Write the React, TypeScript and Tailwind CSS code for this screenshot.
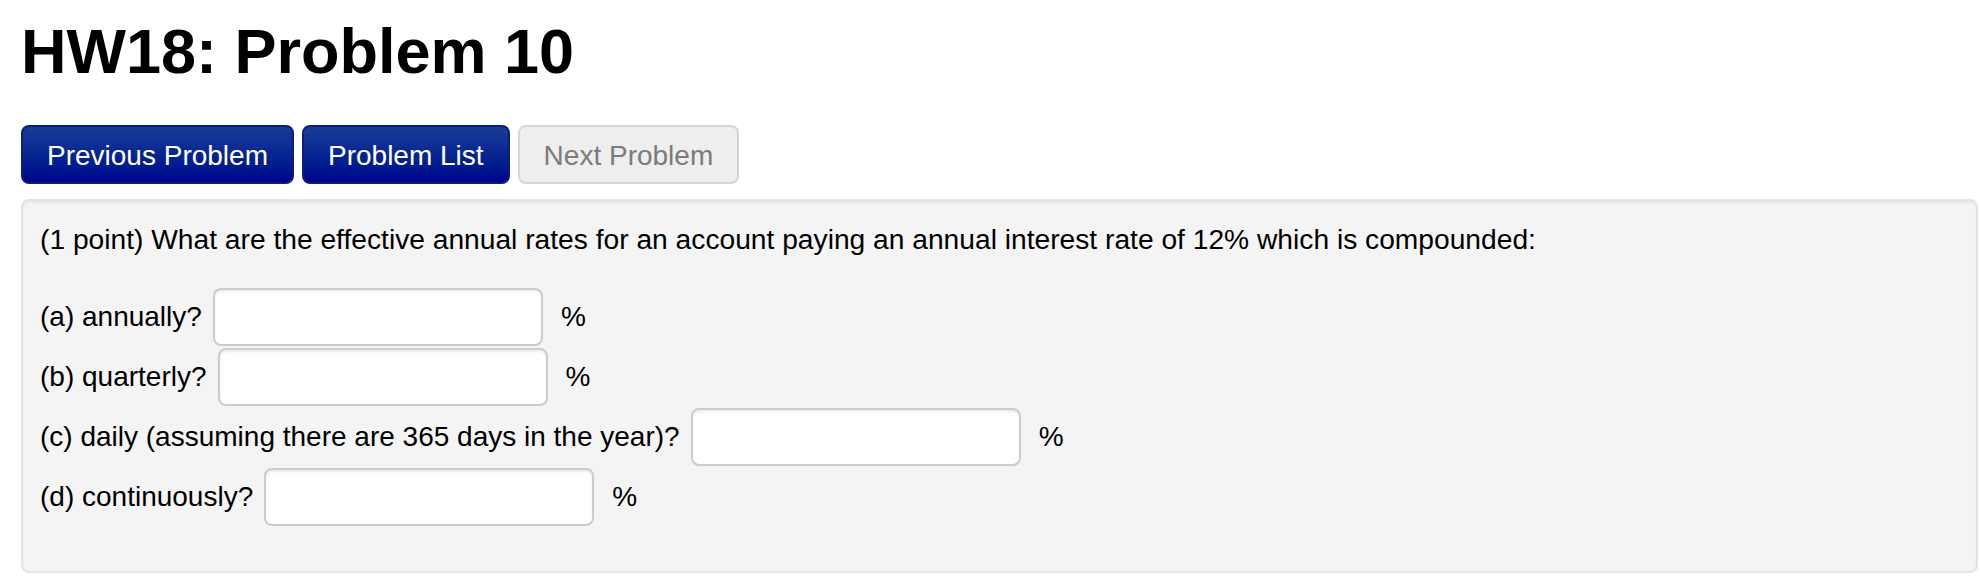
import React from "react";

const rows = [
  { label: "(a) annually?" },
  { label: "(b) quarterly?" },
  { label: "(c) daily (assuming there are 365 days in the year)?" },
  { label: "(d) continuously?" },
];

export default function App() {
  const navBtn =
    "flex h-[59px] items-center rounded-[8px] border-2 px-[24px] pt-[2px] text-[28px] leading-[40px]";

  return (
    <div className="min-h-[588px] bg-white pl-[21px] pr-[2px] pt-[20px] font-['Liberation_Sans',Arial,sans-serif] text-black">
      <h1 className="text-[63px] font-bold leading-[62px]">HW18: Problem 10</h1>

      {/* problem navigation */}
      <div className="mt-[43px] flex gap-[8px]">
        <button
          className={`${navBtn} border-[#0b1f7a] bg-linear-to-b from-[#1b3b95] to-[#00008b] text-white`}
        >
          Previous Problem
        </button>
        <button
          className={`${navBtn} border-[#0b1f7a] bg-linear-to-b from-[#1b3b95] to-[#00008b] text-white`}
        >
          Problem List
        </button>
        <button
          disabled
          className={`${navBtn} border-[#d6d6d6] bg-[#eeeeee] text-[#7b7b7b]`}
        >
          Next Problem
        </button>
      </div>

      {/* problem body */}
      <div className="mt-[15px] rounded-[8px] border-2 border-[#e3e3e3] bg-[#f4f4f4] px-[17px] pt-[18px] pb-[44px] shadow-[inset_0_2px_2px_rgba(0,0,0,0.05)]">
        <p className="text-[28.2px] leading-[40px]">
          (1 point) What are the effective annual rates for an account paying an
          annual interest rate of 12% which is compounded:
        </p>

        <div className="mt-[28px] flex flex-col text-[28px] leading-[40px]">
          {rows.map((r) => (
            <div key={r.label} className="flex h-[60px] items-center">
              <span>{r.label}</span>
              <input
                type="text"
                className="ml-[11px] h-[58px] w-[330px] rounded-[8px] border-2 border-[#cccccc] bg-white px-3 text-[28px] shadow-[inset_0_2px_2px_rgba(0,0,0,0.075)] outline-none"
              />
              <span className="ml-[18px]">%</span>
            </div>
          ))}
        </div>
      </div>
    </div>
  );
}
